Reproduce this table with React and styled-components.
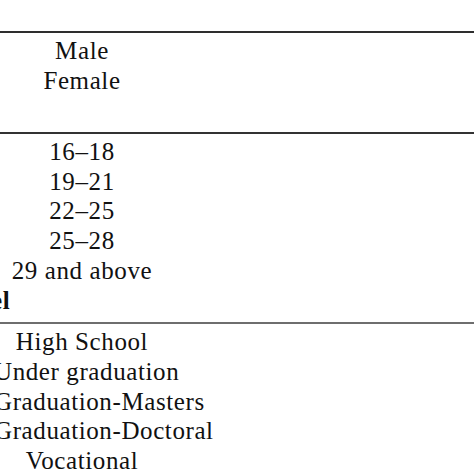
import styled, { createGlobalStyle } from "styled-components";

const GlobalStyle = createGlobalStyle`
    html, body {
        margin: 0;
        padding: 0;
        background: #ffffff;
        overflow: hidden;
    }
`;

const Page = styled.div`
    width: 474px;
    height: 474px;
    overflow: hidden;
    font-family: "Liberation Serif", "Times New Roman", serif;
    font-size: 25px;
    letter-spacing: 0.6px;
    color: #111111;
`;

// the table is wider than the frame: its label column sits off to the left
const Table = styled.div`
    margin-left: -173px;
    width: 660px;
`;

const Section = styled.div`
    padding: ${(p) => (p.$head ? "0" : "3px 0 7px")};
    height: ${(p) => (p.$head ? "31px" : "auto")};
    border-bottom: 2px solid ${(p) => p.$rule};
`;

const Row = styled.div`
    display: grid;
    grid-template-columns: 167px 176px 1fr;
    height: 29.7px;
    line-height: 29.7px;
`;

const Label = styled.div`
    font-weight: 700;
    white-space: nowrap;
`;

const Value = styled.div`
    text-align: center;
    white-space: nowrap;
`;

const sections = [
    {
        rule: "#333333",
        rows: [{ value: "Male" }, { value: "Female" }, {}],
    },
    {
        rule: "#6e6e6e",
        rows: [
            { value: "16–18" },
            { value: "19–21" },
            { value: "22–25" },
            { value: "25–28" },
            { value: "29 and above" },
            { label: "Education Level" },
        ],
    },
    {
        rule: "transparent",
        rows: [
            { value: "High School" },
            { value: "Under graduation" },
            { value: "Graduation-Masters" },
            { value: "Graduation-Doctoral" },
            { value: "Vocational" },
        ],
    },
];

function App() {
    return (
        <Page>
            <GlobalStyle />
            <Table>
                <Section $head $rule="#2e2e2e" />
                {sections.map((section, i) => (
                    <Section key={i} $rule={section.rule}>
                        {section.rows.map((row, j) => (
                            <Row key={j}>
                                <Label>{row.label}</Label>
                                <Value>{row.value}</Value>
                                <div />
                            </Row>
                        ))}
                    </Section>
                ))}
            </Table>
        </Page>
    );
}

export default App;
